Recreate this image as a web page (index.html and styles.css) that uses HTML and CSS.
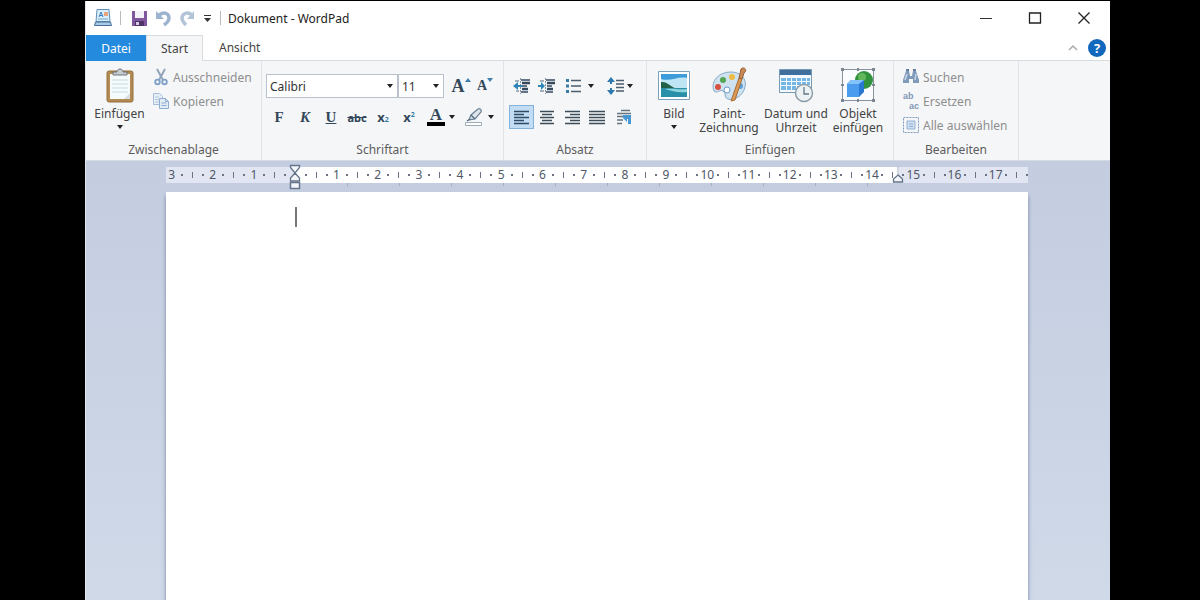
FILE: index.html
```html
<!DOCTYPE html>
<html lang="de">
<head>
    <meta charset="UTF-8">
    <meta name="viewport" content="width=device-width, initial-scale=1.0">
    <title>Dokument - WordPad</title>
    <link rel="stylesheet" href="styles.css">
</head>
<body>
    <div class="window">
        <header class="titlebar">
            <svg class="app-icon" width="18" height="20" viewBox="0 0 18 20">
                <path d="M3 1.500h12l1 12H2z" fill="#d9edfa" stroke="#5e8fb8"/>
                <path d="M5 9l2-5 2 5M5.500 7.500h3" fill="none" stroke="#3d7fc0"/>
                <path d="M10 4h4v4h-4z" fill="#e9a37e"/>
                <path d="M4 11h10" stroke="#78a9d0"/>
                <path d="M1.500 14h15l1 3.500H.5z" fill="#a9cae6" stroke="#476f98"/>
            </svg>
            <span class="separator"></span>
            <button class="quick" aria-label="Speichern">
                <svg width="17" height="17" viewBox="0 0 17 17">
                    <path d="M1 1h15v15H1z" fill="#80569f"/>
                    <path d="M4 1h9v7H4z" fill="#f4f0f8"/>
                    <path d="M4 11h9v5H4z" fill="#503468"/>
                    <path d="M5 12h3v3H5z" fill="#d9cce5"/>
                </svg>
            </button>
            <button class="quick" aria-label="Rückgängig">
                <svg width="17" height="17" viewBox="0 0 17 17">
                    <path d="M4 5c6-4 10-1 10 3 0 3-2 5-5 7" fill="none" stroke="#9db4d1" stroke-width="3.500"/>
                    <path d="M1 1v8h8z" fill="#9db4d1"/>
                </svg>
            </button>
            <button class="quick" aria-label="Wiederholen">
                <svg width="17" height="17" viewBox="0 0 17 17">
                    <path d="M13 5C8 1 3 4 3 8c0 3 2 5 4 7" fill="none" stroke="#b3c3d8" stroke-width="3.500"/>
                    <path d="M15 1v8H8z" fill="#b3c3d8"/>
                </svg>
            </button>
            <button class="quick narrow" aria-label="Schnellzugriff anpassen">
                <svg width="9" height="9" viewBox="0 0 9 9"><path d="M1 1.500h7" stroke="#333"/><path d="M1 4h7L4.500 8z" fill="#333"/></svg>
            </button>
            <span class="separator"></span>
            <h1>Dokument - WordPad</h1>
            <div class="window-buttons">
                <button aria-label="Minimieren"><svg width="14" height="14" viewBox="0 0 14 14"><path d="M1 7.500h12" stroke="#333"/></svg></button>
                <button aria-label="Maximieren"><svg width="14" height="14" viewBox="0 0 14 14"><path d="M1.500 2h11v10h-11z" fill="none" stroke="#222" stroke-width="1.300"/></svg></button>
                <button aria-label="Schließen"><svg width="14" height="14" viewBox="0 0 14 14"><path d="M1.500 1.500l11 11M12.500 1.500l-11 11" stroke="#222" stroke-width="1.300"/></svg></button>
            </div>
        </header>

        <nav class="tabs">
            <button class="tab file">Datei</button>
            <button class="tab active">Start</button>
            <button class="tab">Ansicht</button>
            <div class="tab-tools">
                <button aria-label="Menüband minimieren"><svg width="10" height="8" viewBox="0 0 10 8"><path d="M1 6l4-4 4 4" fill="none" stroke="#aaa" stroke-width="1.500"/></svg></button>
                <button class="help" aria-label="Hilfe">?</button>
            </div>
        </nav>

        <div class="ribbon">
            <section class="group clipboard">
                <div class="group-body">
                    <button class="big">
                        <svg width="36" height="36" viewBox="0 0 36 36">
                            <rect x="5" y="4" width="26" height="31" rx="2" fill="#b28a52" stroke="#94703c"/>
                            <path d="M8 7h20v25H8z" fill="#f5fafb"/>
                            <path d="M10 13h16M10 17h16M10 21h16M10 25h16" stroke="#c4dde6"/>
                            <path d="M22 32l6-6v6z" fill="#d6dfe1"/>
                            <path d="M11 8V5h4c0-4 6-4 6 0h4v3z" fill="#c6cccf" stroke="#6f777c"/>
                        </svg>
                        <span>Einfügen</span>
                        <i class="arrow"></i>
                    </button>
                    <div class="list">
                        <button class="small" disabled>
                            <svg width="16" height="18" viewBox="0 0 16 18">
                                <path d="M4 1l6 11M12 1L6 12" stroke="#93a5bb" stroke-width="2"/>
                                <circle cx="4.500" cy="14" r="2.300" fill="none" stroke="#7f9fc6" stroke-width="1.800"/>
                                <circle cx="11.500" cy="14" r="2.300" fill="none" stroke="#7f9fc6" stroke-width="1.800"/>
                            </svg>
                            Ausschneiden
                        </button>
                        <button class="small" disabled>
                            <svg width="16" height="18" viewBox="0 0 16 18">
                                <path d="M.5 1.500h6l3 3v8h-9z" fill="#e6eff8" stroke="#a5bdd8"/>
                                <path d="M2 5h4M2 7.500h5M2 10h4" stroke="#b1c8df"/>
                                <path d="M6.500 6.500h6l3 3v7h-9z" fill="#e1ecf7" stroke="#8eadd0"/>
                                <path d="M12.500 6.500v3h3M8.500 11h5M8.500 13.500h5" fill="none" stroke="#8eadd0"/>
                            </svg>
                            Kopieren
                        </button>
                    </div>
                </div>
                <h2>Zwischenablage</h2>
            </section>

            <section class="group font">
                <div class="group-body rows">
                    <div class="row">
                        <div class="combo family">
                            <select aria-label="Schriftfamilie"><option>Calibri</option></select>
                            <i class="arrow"></i>
                        </div>
                        <div class="combo size">
                            <select aria-label="Schriftgrad"><option>11</option></select>
                            <i class="arrow"></i>
                        </div>
                        <button class="tool letter grow" aria-label="Schriftart vergrößern">A<svg width="6" height="4" viewBox="0 0 6 4"><path d="M0 4l3-4 3 4z" fill="#3f7fae"/></svg></button>
                        <button class="tool letter shrink" aria-label="Schriftart verkleinern">A<svg width="6" height="4" viewBox="0 0 6 4"><path d="M0 0h6L3 4z" fill="#3f7fae"/></svg></button>
                    </div>
                    <div class="row">
                        <button class="tool letter" aria-label="Fett">F</button>
                        <button class="tool letter italic" aria-label="Kursiv">K</button>
                        <button class="tool letter underline" aria-label="Unterstrichen">U</button>
                        <button class="tool strike" aria-label="Durchgestrichen">abc</button>
                        <button class="tool script" aria-label="Tiefgestellt">x<sub>2</sub></button>
                        <button class="tool script" aria-label="Hochgestellt">x<sup>2</sup></button>
                        <button class="tool split" aria-label="Textfarbe"><span class="color">A</span><i class="arrow"></i></button>
                        <button class="tool split" aria-label="Texthervorhebungsfarbe">
                            <svg width="20" height="20" viewBox="0 0 20 20">
                                <path d="M5 13l2-5 7-6c2-1 4 1 3 3l-6 7z" fill="#dfe7ed" stroke="#6d8496" stroke-width="1.300"/>
                                <path d="M7 8l4 4M3 14l3-2" stroke="#536b7e" stroke-width="1.300"/>
                                <path d="M1.500 15.500h16v3h-16z" fill="#fff" stroke="#9dabb6"/>
                            </svg>
                            <i class="arrow"></i>
                        </button>
                    </div>
                </div>
                <h2>Schriftart</h2>
            </section>

            <section class="group paragraph">
                <div class="group-body rows">
                    <div class="row">
                        <button class="tool" aria-label="Einzug verkleinern">
                            <svg width="20" height="20" viewBox="0 0 20 20">
                                <path d="M9 4h9M10 10h5M9 16h7" stroke="#34495e" stroke-width="1.500"/>
                                <path d="M10 7h8M10 13h6" stroke="#34495e" stroke-width="2.500"/>
                                <path d="M8.500 2v16" stroke="#8593a0" stroke-dasharray="2 1"/>
                                <path d="M1 10l5-4v3h4v2H6v3z" fill="#2e86b8"/>
                                <path d="M3 5h4M4 15h3" stroke="#52687b"/>
                            </svg>
                        </button>
                        <button class="tool" aria-label="Einzug vergrößern">
                            <svg width="20" height="20" viewBox="0 0 20 20">
                                <path d="M9 4h9M10 10h5M9 16h7" stroke="#34495e" stroke-width="1.500"/>
                                <path d="M10 7h8M10 13h6" stroke="#34495e" stroke-width="2.500"/>
                                <path d="M8.500 2v16" stroke="#8593a0" stroke-dasharray="2 1"/>
                                <path d="M8 10L4 6v3H1v2h3v3z" fill="#2e86b8"/>
                                <path d="M3 5h4M3 15h4" stroke="#52687b"/>
                            </svg>
                        </button>
                        <button class="tool split" aria-label="Liste">
                            <svg width="20" height="20" viewBox="0 0 20 20">
                                <path d="M7 4.500h10M7 10h10M7 15.500h10" stroke="#4c5e6c" stroke-width="1.300"/>
                                <path d="M2 3h3v3H2zM2 8.500h3v3H2zM2 14h3v3H2z" fill="#377aa5"/>
                            </svg>
                            <i class="arrow"></i>
                        </button>
                        <button class="tool split spacing" aria-label="Zeilenabstand">
                            <svg width="20" height="20" viewBox="0 0 20 20">
                                <path d="M10 4.500h8M10 8h8M10 11.500h8M10 15h8" stroke="#4c5e6c" stroke-width="1.300"/>
                                <path d="M5 1l4 5H6v2H4V6H1zM5 19l4-5H6v-2H4v2H1z" fill="#2d78ac"/>
                            </svg>
                            <i class="arrow"></i>
                        </button>
                    </div>
                    <div class="row">
                        <button class="tool selected" aria-label="Linksbündig">
                            <svg width="20" height="20" viewBox="0 0 20 20"><path d="M2 4.500h15M2 7.500h10M2 10.500h15M2 13.500h10M2 16.500h15" stroke="#2f4a66" stroke-width="1.500"/></svg>
                        </button>
                        <button class="tool" aria-label="Zentriert">
                            <svg width="20" height="20" viewBox="0 0 20 20"><path d="M3 4.500h14M5 7.500h10M3 10.500h14M5 13.500h10M3 16.500h14" stroke="#3c4c59" stroke-width="1.500"/></svg>
                        </button>
                        <button class="tool" aria-label="Rechtsbündig">
                            <svg width="20" height="20" viewBox="0 0 20 20"><path d="M3 4.500h15M8 7.500h10M3 10.500h15M8 13.500h10M3 16.500h15" stroke="#3c4c59" stroke-width="1.500"/></svg>
                        </button>
                        <button class="tool" aria-label="Blocksatz">
                            <svg width="20" height="20" viewBox="0 0 20 20"><path d="M2 4.500h16M2 7.500h16M2 10.500h16M2 13.500h16M2 16.500h16" stroke="#3c4c59" stroke-width="1.500"/></svg>
                        </button>
                        <button class="tool" aria-label="Absatz">
                            <svg width="20" height="20" viewBox="0 0 20 20">
                                <path d="M9 3.500h9M5 6.500h14M5 9.500h6M5 13h6M5 16.500h5" stroke="#65737f" stroke-width="1.300"/>
                                <path d="M11 8h8v9h-3v-5h-1v3l-4-4z" fill="#4798d2"/>
                            </svg>
                        </button>
                    </div>
                </div>
                <h2>Absatz</h2>
            </section>

            <section class="group insert">
                <div class="group-body">
                    <button class="big">
                        <svg width="36" height="36" viewBox="0 0 36 36">
                            <path d="M2.500 4.500h31v28h-31z" fill="#fff" stroke="#7ba0bb"/>
                            <path d="M5 7h26v23H5z" fill="#3c9cda"/>
                            <path d="M5 12c9 3 17-3 26-1v11H5z" fill="#bde5f4"/>
                            <path d="M5 15c6-1 9 5 17 7H5z" fill="#226148"/>
                            <path d="M5 21h26v9H5z" fill="#2a8fa8"/>
                            <path d="M9 22c7-1 13 1 22 0v3c-9 1-15-1-22-3z" fill="#8ed6dc"/>
                        </svg>
                        <span>Bild</span>
                        <i class="arrow"></i>
                    </button>
                    <button class="big">
                        <svg width="36" height="36" viewBox="0 0 36 36">
                            <path d="M3 24C-1 14 8 5 20 5c10 0 16 7 14 15-2 9-11 14-17 12-5-2-1-6-5-8-3-2-6 3-9 0z" fill="#cfe2f0" stroke="#86a9c4"/>
                            <circle cx="7" cy="20" r="3" fill="#d6503f"/>
                            <circle cx="12" cy="13" r="3" fill="#55a552"/>
                            <circle cx="21" cy="10" r="3" fill="#efbb45"/>
                            <circle cx="16" cy="23" r="3" fill="#fff" stroke="#6c9cd0"/>
                            <circle cx="29" cy="19" r="3" fill="#5c9fdd"/>
                            <path d="M20 34l8-23 3 1-7 21z" fill="#d99a55" stroke="#a96c35"/>
                            <path d="M28 11l2-9c3-3 7 1 3 4l-2 6z" fill="#c98955" stroke="#945c35"/>
                        </svg>
                        <span>Paint-<br>Zeichnung</span>
                    </button>
                    <button class="big">
                        <svg width="36" height="36" viewBox="0 0 36 36">
                            <path d="M1.500 2.500h32v23h-32z" fill="#f4faff" stroke="#7899b4"/>
                            <path d="M2 3h31v5H2z" fill="#416f9d"/>
                            <path d="M3 11h5v3H3zM9 11h4v3H9zM14 11h4v3h-4zM19 11h4v3h-4zM24 11h4v3h-4zM29 11h3v3h-3zM3 15h5v3H3zM9 15h4v3H9zM14 15h4v3h-4zM19 15h4v3h-4zM24 15h4v3h-4zM29 15h3v3h-3zM3 19h5v4H3zM9 19h4v4H9zM14 19h4v4h-4zM19 19h4v4h-4z" fill="#76b6e5"/>
                            <circle cx="26" cy="26" r="8.500" fill="#edf3f5" stroke="#8c9da8" stroke-width="1.500"/>
                            <path d="M26 20v7h5" fill="none" stroke="#627985" stroke-width="1.300"/>
                        </svg>
                        <span>Datum und<br>Uhrzeit</span>
                    </button>
                    <button class="big">
                        <svg width="36" height="36" viewBox="0 0 36 36">
                            <path d="M2.500 2.500h31v31h-31z" fill="#fafcff" stroke="#8993a0"/>
                            <circle cx="24" cy="13" r="9" fill="#32923e"/>
                            <circle cx="22" cy="10" r="4" fill="#62b75b"/>
                            <path d="M7 17l4-4h13v12l-5 5H7z" fill="#2878d2"/>
                            <path d="M7 17h12v13H7z" fill="#4b9bee"/>
                            <path d="M7 17l4-4h13l-5 4z" fill="#83c2fa"/>
                            <path d="M1 1h3v3H1zM17 1h2v3h-2zM32 1h3v3h-3zM1 17h3v2H1zM32 17h3v2h-3zM1 32h3v3H1zM17 32h2v3h-2zM32 32h3v3h-3z" fill="#7b8691"/>
                        </svg>
                        <span>Objekt<br>einfügen</span>
                    </button>
                </div>
                <h2>Einfügen</h2>
            </section>

            <section class="group edit">
                <div class="group-body">
                    <div class="list">
                        <button class="small" disabled>
                            <svg width="16" height="18" viewBox="0 0 16 18">
                                <path d="M3 3h3l1 5h2l1-5h3l3 9v3h-6v-4H6v4H0v-3z" fill="#7f9bb9"/>
                                <path d="M3 2h3M10 2h3" stroke="#647f9f" stroke-width="2"/>
                                <path d="M2 12l2-6M12 12l1-6" stroke="#c5d8eb" stroke-width="1.500"/>
                            </svg>
                            Suchen
                        </button>
                        <button class="small" disabled>
                            <span class="replace-icon" aria-hidden="true"><b>ab</b><b>ac</b></span>
                            Ersetzen
                        </button>
                        <button class="small" disabled>
                            <svg width="16" height="18" viewBox="0 0 16 18">
                                <path d="M.5 1.500h15v15H.5z" fill="none" stroke="#7f9bbd" stroke-dasharray="2 1"/>
                                <path d="M4 5h8v8H4z" fill="#cddff0" stroke="#94b1d1"/>
                                <path d="M6 8h4M6 10.500h4" stroke="#94b1d1"/>
                            </svg>
                            Alle auswählen
                        </button>
                    </div>
                </div>
                <h2>Bearbeiten</h2>
            </section>
        </div>

        <main class="workspace">
            <div class="ruler">
                <ol class="scale">
                    <li>3</li><li>2</li><li>1</li><li></li><li>1</li><li>2</li><li>3</li>
                    <li>4</li><li>5</li><li>6</li><li>7</li><li>8</li><li>9</li><li>10</li>
                    <li>11</li><li>12</li><li>13</li><li>14</li><li>15</li><li>16</li><li>17</li>
                </ol>
                <svg class="marker left" width="12" height="26" viewBox="0 0 12 26">
                    <path d="M1.500 1.500h9v2L6 9 1.500 3.500z" fill="#f3f6fa" stroke="#65748a" stroke-width="1.300"/>
                    <path d="M6 9l4.500 5v3h-9v-3z" fill="#f3f6fa" stroke="#65748a" stroke-width="1.300"/>
                    <path d="M1.500 18.500h9v6h-9z" fill="#f3f6fa" stroke="#65748a" stroke-width="1.500"/>
                </svg>
                <svg class="marker right" width="12" height="26" viewBox="0 0 12 26">
                    <path d="M6 2v9" stroke="#a4afc0"/>
                    <path d="M6 11l4.500 4v3h-9v-3z" fill="#f3f6fa" stroke="#65748a" stroke-width="1.300"/>
                </svg>
            </div>
            <div class="page">
                <textarea aria-label="Dokument"></textarea>
                <span class="caret"></span>
            </div>
        </main>
    </div>
</body>
</html>
```

FILE: styles.css
```css
* {
    margin: 0;
    padding: 0;
    box-sizing: border-box;
}

body {
    font-family: 'Noto Sans', 'Open Sans', sans-serif;
    font-size: 12px;
    color: #444;
    background: #000;
    min-height: 100vh;
    display: flex;
    padding: 1px 90px 0 85px;
}

button,
select,
textarea {
    font: inherit;
    color: inherit;
    background: none;
    border: none;
    outline: none;
}

button {
    display: flex;
    align-items: center;
    justify-content: center;
}

svg {
    flex-shrink: 0;
}

h1,
h2 {
    font-size: 12px;
    font-weight: normal;
}

.window {
    flex: 1;
    min-width: 0;
    display: flex;
    flex-direction: column;
    background: #fff;
    border-left: 1px solid #e3e8f0;
}

/* Title bar */
.titlebar {
    display: flex;
    align-items: center;
    height: 34px;
    padding-left: 8px;
}

.titlebar h1 {
    color: #222;
    padding-left: 7px;
}

.separator {
    width: 1px;
    height: 14px;
    background: #bbb;
    margin-left: 8px;
}

.quick {
    width: 24px;
    height: 24px;
}

.separator + .quick {
    margin-left: 6px;
}

.quick.narrow {
    width: 17px;
}

.quick.narrow + .separator {
    margin-left: 4px;
}

.window-buttons {
    display: flex;
    margin-left: auto;
    padding-right: 2px;
}

.window-buttons button {
    width: 49px;
    height: 32px;
}

/* Tabs */
.tabs {
    display: flex;
    height: 26px;
    border-bottom: 1px solid #dadbdc;
}

.tab {
    padding: 0 16px;
}

.tab.file {
    width: 60px;
    margin-bottom: -1px;
    color: #fff;
    background: #248ade;
}

.tab.active {
    width: 57px;
    margin-bottom: -1px;
    background: #f5f6f7;
    border: 1px solid #dadbdc;
    border-bottom: none;
}

.tab-tools {
    display: flex;
    align-items: center;
    gap: 10px;
    margin-left: auto;
    padding-right: 4px;
}

.help {
    width: 18px;
    height: 18px;
    border-radius: 50%;
    background: #1268bd;
    color: #fff;
    font-size: 13px;
    font-weight: bold;
}

/* Ribbon */
.ribbon {
    display: flex;
    height: 100px;
    background: #f5f6f8;
    border-bottom: 1px solid #d5dbe5;
}

.group {
    display: flex;
    flex-direction: column;
    border-right: 1px solid #e2e4e7;
}

.group h2 {
    text-align: center;
    line-height: 20px;
    color: #5c5c5c;
}

.group-body {
    display: flex;
    height: 79px;
    padding-top: 4px;
}

.clipboard {
    width: 176px;
}

.font {
    width: 242px;
}

.paragraph {
    width: 143px;
}

.insert {
    width: 247px;
}

.edit {
    width: 125px;
}

.big {
    flex-direction: column;
    justify-content: flex-start;
    padding-top: 2px;
    line-height: 14px;
    white-space: nowrap;
}

.big span {
    margin-top: 4px;
}

.big .arrow {
    margin-top: 4px;
}

.clipboard .big {
    width: 67px;
}

.insert .group-body {
    display: grid;
    grid-template-columns: 44px 66px 68px 56px;
    padding-left: 5px;
}

.small {
    height: 24px;
    gap: 4px;
    color: #8e8e8e;
    white-space: nowrap;
}

.list {
    display: flex;
    flex-direction: column;
    align-items: flex-start;
}

.edit .list {
    padding-left: 9px;
}

.arrow {
    border: 3px solid transparent;
    border-top: 4px solid #222;
    border-bottom: none;
}

.rows {
    flex-direction: column;
    gap: 7px;
    padding-top: 13px;
    padding-left: 4px;
}

.row {
    display: flex;
    align-items: center;
    height: 24px;
}

.tool {
    width: 26px;
    height: 24px;
    color: #33475a;
}

.tool.split {
    width: 38px;
    gap: 4px;
}

.paragraph .rows {
    padding-left: 5px;
}

.paragraph .tool {
    width: 25px;
}

.paragraph .tool.split {
    width: 40px;
    gap: 4px;
}

.paragraph .tool.spacing {
    gap: 1px;
}

.paragraph .tool.selected {
    background: #c1dcf3;
    border: 1px solid #83b3dc;
}

.combo {
    position: relative;
    height: 24px;
}

.combo select {
    appearance: none;
    width: 100%;
    height: 24px;
    padding: 0 3px;
    background: #fff;
    border: 1px solid #b9c2cc;
    color: #333;
}

.combo .arrow {
    position: absolute;
    right: 5px;
    top: 10px;
    pointer-events: none;
}

.combo.family {
    width: 132px;
}

.combo.size {
    width: 46px;
    margin-right: 4px;
}

.letter {
    font-family: 'Liberation Serif', serif;
    font-size: 15px;
    font-weight: bold;
}

.italic {
    font-style: italic;
}

.underline {
    text-decoration: underline;
}

.grow {
    font-size: 18px;
}

.shrink {
    width: 22px;
    font-size: 14px;
}

.grow svg,
.shrink svg {
    align-self: flex-start;
    margin-top: 4px;
}

.strike {
    font-size: 11px;
    font-weight: bold;
    text-decoration: line-through;
}

.script {
    display: block;
    font-size: 13px;
    font-weight: bold;
    line-height: 20px;
}

.script sub,
.script sup {
    font-size: 7px;
    line-height: 1;
    color: #377aa5;
}

.script sub {
    vertical-align: baseline;
}

.color {
    width: 18px;
    font-family: 'Liberation Serif', serif;
    font-size: 17px;
    font-weight: bold;
    line-height: 14px;
    border-bottom: 4px solid #000;
}

.replace-icon {
    display: flex;
    flex-direction: column;
    width: 16px;
    font-family: 'Liberation Sans', sans-serif;
    font-size: 9px;
    line-height: 10px;
    color: #8298b3;
}

.replace-icon b:first-child {
    align-self: flex-start;
}

.replace-icon b:last-child {
    align-self: flex-end;
}

/* Document area */
.workspace {
    flex: 1;
    display: flex;
    flex-direction: column;
    padding: 6px 82px 0 80px;
    background: linear-gradient(#c4cde0, #cfd9e8);
}

.ruler {
    position: relative;
    height: 25px;
    background: repeating-linear-gradient(90deg, transparent 0 51px, #a4aec1 51px 52px) 130px 16px / 602px 3px no-repeat;
}

.scale {
    display: flex;
    height: 16px;
    overflow: hidden;
    list-style: none;
    line-height: 16px;
    color: #4f5766;
    background: linear-gradient(90deg, #e1e6f2 15%, #fff 15% 85%, #e1e6f2 85%);
}

/* One centimetre: the number, a dot, the half mark and another dot */
.scale li {
    flex: 0 0 4.78%;
    min-width: 0;
    display: flex;
    justify-content: center;
    padding-right: 30px;
    background:
        linear-gradient(#6b7383, #6b7383) 15px 7px / 2px 2px no-repeat,
        linear-gradient(#6b7383, #6b7383) 26px 5px / 1px 6px no-repeat,
        linear-gradient(#6b7383, #6b7383) 36px 7px / 2px 2px no-repeat;
}

.marker {
    position: absolute;
    top: -3px;
}

.marker.left {
    left: 15%;
    margin-left: -6px;
}

.marker.right {
    left: 85%;
    margin-left: -7px;
}

.page {
    position: relative;
    flex: 1;
    display: flex;
    background: #fff;
    box-shadow: 0 4px 4px #7483a0;
}

.page textarea {
    flex: 1;
    padding: 14px 130px;
    font-family: Calibri, Lato, sans-serif;
    font-size: 15px;
    resize: none;
}

.caret {
    position: absolute;
    left: 15%;
    top: 15px;
    width: 2px;
    height: 20px;
    background: #777;
}
```
